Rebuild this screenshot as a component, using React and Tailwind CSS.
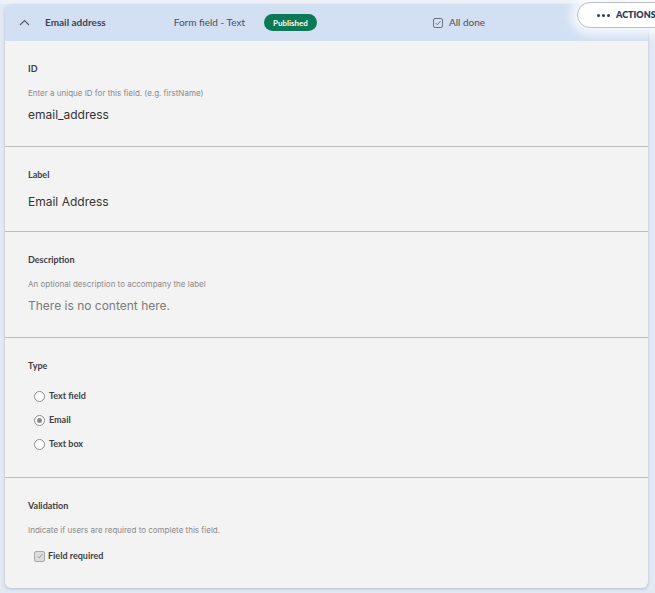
import React from 'react';

const labelFont = { fontFamily: 'Lato, "Open Sans", sans-serif' };

const Section = ({ title, helper, children, last }) => (
  <div className={`px-[23px] pt-[22px] ${last ? 'pb-[25px]' : 'border-b border-[#bdbdbd]'}`}>
    <p className="text-[9px] leading-[12px] font-bold text-[#3b3f47]" style={labelFont}>
      {title}
    </p>
    {helper && (
      <p className="mt-[12px] text-[8px] leading-[12px] text-[#8a8a8a]" style={{ fontFamily: 'Inter, sans-serif' }}>
        {helper}
      </p>
    )}
    {children}
  </div>
);

const Value = ({ text, muted, gap, pb = 'pb-[23px]' }) => (
  <p
    className={`${gap} ${pb} text-[12px] leading-[16px] ${muted ? 'text-[#7b7b7b]' : 'text-[#333333]'}`}
    style={{ fontFamily: 'Inter, sans-serif' }}
  >
    {text}
  </p>
);

const Radio = ({ label, checked }) => (
  <div className="flex items-center gap-[4px] h-[14px] pl-[6px]">
    <span className="w-[11px] h-[11px] rounded-full border border-[#8c8c8c] bg-white flex items-center justify-center">
      {checked && <span className="w-[5px] h-[5px] rounded-full bg-[#8a8a8a]" />}
    </span>
    <span className="text-[9px] font-bold text-[#3b3f47]" style={labelFont}>{label}</span>
  </div>
);

export default function App() {
  return (
    <div className="relative w-[655px] h-[593px] bg-[#e3e9f3] overflow-hidden">
      <div className="absolute inset-x-0 top-0 h-[4px] bg-[#eef1f6]" />
      <div className="relative ml-[5px] mr-[7px] pt-[4px]">
        <div className="rounded-[6px] overflow-hidden shadow-[0_1px_3px_rgba(80,100,140,0.35)] bg-[#f3f3f3]">
          {/* header */}
          <div className="h-[37px] bg-[#d3e0f3] flex items-center text-[10px]" style={labelFont}>
            <svg width="11" height="7" viewBox="0 0 11 7" className="ml-[14px]" fill="none">
              <path d="M1 6 L5.5 1.5 L10 6" stroke="#555b66" strokeWidth="1.1" />
            </svg>
            <span className="ml-[15px] font-bold text-[#3d4350]">Email address</span>
            <span className="ml-[68px] text-[#4a4f5a]">Form field - Text</span>
            <span className="ml-[19px] h-[17px] w-[53px] rounded-full bg-[#0b7857] text-white text-[8px] font-bold flex items-center justify-center">
              Published
            </span>
            <span className="ml-[116px] flex items-center gap-[6px] text-[#4a4f5a]">
              <svg width="10" height="10" viewBox="0 0 10 10" fill="none">
                <rect x="0.5" y="0.5" width="9" height="9" rx="1.5" stroke="#6b7080" />
                <path d="M2.5 5 L4.3 6.8 L7.6 3" stroke="#6b7080" strokeWidth="0.9" />
              </svg>
              All done
            </span>
          </div>

          <Section title="ID" helper="Enter a unique ID for this field. (e.g. firstName)">
            <Value text="email_address" gap="mt-[8px]" />
          </Section>
          <Section title="Label">
            <Value text="Email Address" gap="mt-[13px]" pb="pb-[21px]" />
          </Section>
          <Section title="Description" helper="An optional description to accompany the label">
            <Value text="There is no content here." muted gap="mt-[8px]" />
          </Section>
          <Section title="Type">
            <div className="mt-[17px] pb-[26px] flex flex-col gap-[10px]">
              <Radio label="Text field" />
              <Radio label="Email" checked />
              <Radio label="Text box" />
            </div>
          </Section>
          <Section title="Validation" helper="Indicate if users are required to complete this field." last>
            <div className="mt-[13px] flex items-center gap-[3px] h-[14px] pl-[6px]">
              <span className="w-[11px] h-[11px] rounded-[2px] border border-[#a8a8a8] bg-[#dcdcdc] flex items-center justify-center">
                <svg width="8" height="8" viewBox="0 0 8 8" fill="none">
                  <path d="M1.5 4.2 L3.2 5.8 L6.5 2" stroke="#8f8f8f" strokeWidth="0.9" />
                </svg>
              </span>
              <span className="text-[9px] font-bold text-[#3b3f47]" style={labelFont}>Field required</span>
            </div>
          </Section>
        </div>
      </div>

      {/* actions button overlaying header */}
      <div className="absolute top-[2px] left-[577px] h-[26px] w-[100px] rounded-full bg-white border border-[#b9bec8] shadow-[0_0_10px_6px_rgba(255,255,255,0.8)] flex items-center pl-[19px] gap-[6px]">
        <span className="flex gap-[2px]">
          <span className="w-[3px] h-[3px] rounded-full bg-[#2c3b5e]" />
          <span className="w-[3px] h-[3px] rounded-full bg-[#2c3b5e]" />
          <span className="w-[3px] h-[3px] rounded-full bg-[#2c3b5e]" />
        </span>
        <span className="text-[9px] font-extrabold text-[#2c3b5e]" style={labelFont}>ACTIONS</span>
      </div>
    </div>
  );
}
